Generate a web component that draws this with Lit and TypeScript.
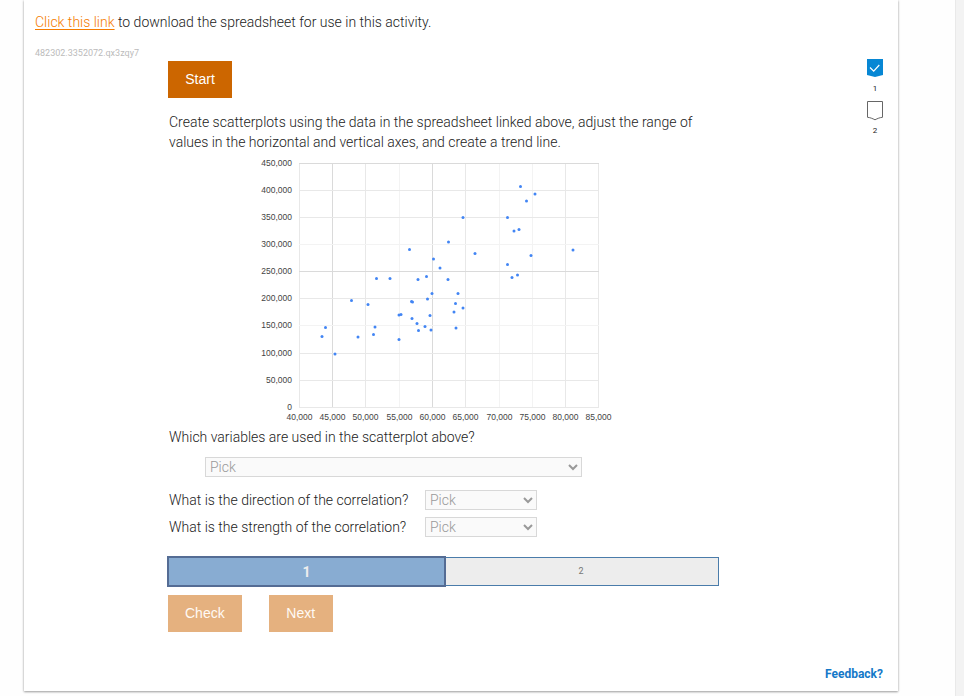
import { LitElement, html, css, svg } from "lit";
import { customElement, property } from "lit/decorators.js";

// Plot geometry is in drawing units, two units to a CSS pixel.
type Line = [number, string];

const STRONG = "#dadada";
const MID = "#e8e8e8";
const FAINT = "#f3f3f3";

const columns: Line[] = [
  [99, MID], [165, STRONG], [231, MID], [299, FAINT], [365, STRONG],
  [431, MID], [499, FAINT], [565, FAINT], [631, MID], [697, MID],
];
const rows: Line[] = [
  [17, STRONG], [71, MID], [125, MID], [179, FAINT], [233, STRONG],
  [287, MID], [341, FAINT], [397, MID], [451, MID], [505, MID],
];

const points: [number, number][] = [
  [319, 189], [253, 247], [280, 247], [336, 249], [353, 243], [367, 208], [380, 226],
  [541, 63], [570, 78], [553, 92], [426, 125], [515, 125], [528, 152], [538, 149],
  [397, 174], [450, 197], [562, 201], [646, 190], [515, 219], [524, 245], [535, 240],
  [396, 249], [203, 291], [236, 299], [151, 345], [144, 363], [170, 398], [216, 364],
  [250, 344], [247, 359], [298, 369], [298, 320], [302, 319], [323, 293], [325, 294],
  [324, 327], [334, 337], [337, 351], [350, 343], [362, 350], [360, 321], [355, 288],
  [364, 277], [416, 277], [411, 297], [426, 306], [408, 314], [412, 346],
];

const thousands = (n: number) => n.toLocaleString("en-US");

@customElement("scatter-plot")
export class ScatterPlot extends LitElement {
  static styles = css`
    :host { display: block; }
    svg { display: block; width: 100%; height: auto; }
    text { font: 17px "Liberation Sans", Arial, sans-serif; fill: #444; }
    .point { fill: #4285f4; }
  `;

  render() {
    return html`
      <svg viewBox="0 0 736 536" role="img" aria-label="Scatterplot">
        ${columns.map(([x, c]) => svg`<line x1=${x} x2=${x} y1="16" y2="506" stroke=${c} stroke-width="2"/>`)}
        ${rows.map(([y, c]) => svg`<line x1="98" x2="698" y1=${y} y2=${y} stroke=${c} stroke-width="2"/>`)}
        ${rows.map(([y], i) => svg`<text x="84" y=${y + 4} text-anchor="end">${thousands(450000 - i * 50000)}</text>`)}
        ${columns.map(([x], i) => svg`<text x=${x} y="530" text-anchor="middle">${thousands(40000 + i * 5000)}</text>`)}
        ${points.map(([x, y]) => svg`<circle class="point" cx=${x} cy=${y} r="3"/>`)}
      </svg>
    `;
  }
}

@customElement("step-marker")
export class StepMarker extends LitElement {
  @property({ type: Boolean }) done = false;
  @property({ type: Number }) step = 1;

  static styles = css`
    :host { display: flex; flex-direction: column; align-items: center; gap: 2px; }
    svg { display: block; width: 16px; height: 20px; }
    span { font: 8px/16px "Roboto", sans-serif; color: #222; }
  `;

  render() {
    return html`
      <svg viewBox="0 0 16 20" fill="none">
        ${this.done
          ? svg`<path d="M0 0h16v16L8 18 0 16z" fill="#0787d4"/><path d="M3 8.5l3.700 3.600L12.300 6" stroke="#fff" stroke-width="1.2"/>`
          : svg`<path d="M.5.5h15v15.800C13 16.500 10.500 17.500 8 18.800 5.500 17.500 3 16.500.5 16.300z" stroke="#666"/>`}
      </svg>
      <span>${this.step}</span>
    `;
  }
}

@customElement("app-root")
export class AppRoot extends LitElement {
  static styles = css`
    * { box-sizing: border-box; }
    :host {
      display: flex;
      min-height: 100vh;
      box-sizing: border-box;
      padding: 0 66px 5px 24px;
      background: linear-gradient(to left, #f3f3f3 8px, #e9e9e9 8px, #e9e9e9 9px, #fefefe 9px);
      font: 300 14px/20px "Roboto", sans-serif;
      color: #222;
    }
    .card {
      flex: 1;
      display: flex;
      flex-direction: column;
      padding: 12px 15px 7px 11px;
      background: #fff;
      box-shadow: 0 1px 2px rgba(0, 0, 0, 0.35), 0 0 3px rgba(0, 0, 0, 0.12);
    }
    p { margin: 0; }
    .intro a { color: #f57c00; text-underline-offset: 2px; }
    .code { margin-top: 15px; font-size: 9px; line-height: 12px; font-weight: 400; color: #bbb; }
    .row { display: flex; justify-content: space-between; }
    .activity { margin: 2px 0 0 132px; width: 552px; display: flex; flex-direction: column; }
    .button {
      border: 0;
      padding: 0 17px 2px;
      min-width: 64px;
      height: 37px;
      background: #cc6600;
      color: #fff;
      font: 14px "Liberation Sans", Arial, sans-serif;
    }
    .button:disabled { background: #e5b17f; color: #fffaf5; }
    .start { align-self: flex-start; margin-left: 1px; }
    .text { padding-left: 2px; }
    .prompt { margin-top: 14px; }
    scatter-plot { width: 368px; margin: 3px 0 0 83px; }
    .variables { margin-top: 4px; }
    select {
      height: 20px;
      padding: 0;
      border: 1px solid #d8d8d8;
      border-radius: 0;
      background-color: #fafafa;
      color: #999;
      opacity: 1;
      font: 300 14px "Roboto", sans-serif;
    }
    .wide { margin: 10px 0 0 38px; width: 377px; }
    .questions { display: grid; grid-template-columns: 246px 112px; column-gap: 10px; row-gap: 7px; margin-top: 13px; }
    .steps { display: flex; align-items: center; margin-top: 19px; }
    .steps button { flex: 1; height: 29px; padding: 0 2px 2px 0; border: 1px solid #4a7caa; border-left: 0; background: #ededed; color: #777; font: 9px "Roboto", sans-serif; }
    .steps .current { flex: 0 0 279px; height: 31px; padding: 0; border: 2px solid #546c94; background: #88acd2; color: #eee; font: bold 14px "Roboto", sans-serif; }
    .actions { display: flex; gap: 27px; margin: 8px 0 0 1px; }
    .progress { display: flex; flex-direction: column; gap: 4px; }
    .feedback { margin-top: auto; align-self: flex-end; font-size: 12px; font-weight: 700; color: #1478c8; text-decoration: none; }
  `;

  render() {
    return html`
      <main class="card">
        <p class="intro"><a href="#">Click this link</a> to download the spreadsheet for use in this activity.</p>
        <p class="code">482302.3352072.qx3zqy7</p>
        <div class="row">
          <section class="activity">
            <button class="button start">Start</button>
            <p class="text prompt">
              Create scatterplots using the data in the spreadsheet linked above, adjust the range of values in the
              horizontal and vertical axes, and create a trend line.
            </p>
            <scatter-plot></scatter-plot>
            <label class="text variables" for="variables">Which variables are used in the scatterplot above?</label>
            <select class="wide" id="variables" disabled><option>Pick</option></select>
            <div class="text questions">
              <label for="direction">What is the direction of the correlation?</label>
              <select id="direction" disabled><option>Pick</option></select>
              <label for="strength">What is the strength of the correlation?</label>
              <select id="strength" disabled><option>Pick</option></select>
            </div>
            <nav class="steps">
              <button class="current">1</button>
              <button>2</button>
            </nav>
            <div class="actions">
              <button class="button" disabled>Check</button>
              <button class="button" disabled>Next</button>
            </div>
          </section>
          <aside class="progress">
            <step-marker done .step=${1}></step-marker>
            <step-marker .step=${2}></step-marker>
          </aside>
        </div>
        <a class="feedback" href="#">Feedback?</a>
      </main>
    `;
  }
}
